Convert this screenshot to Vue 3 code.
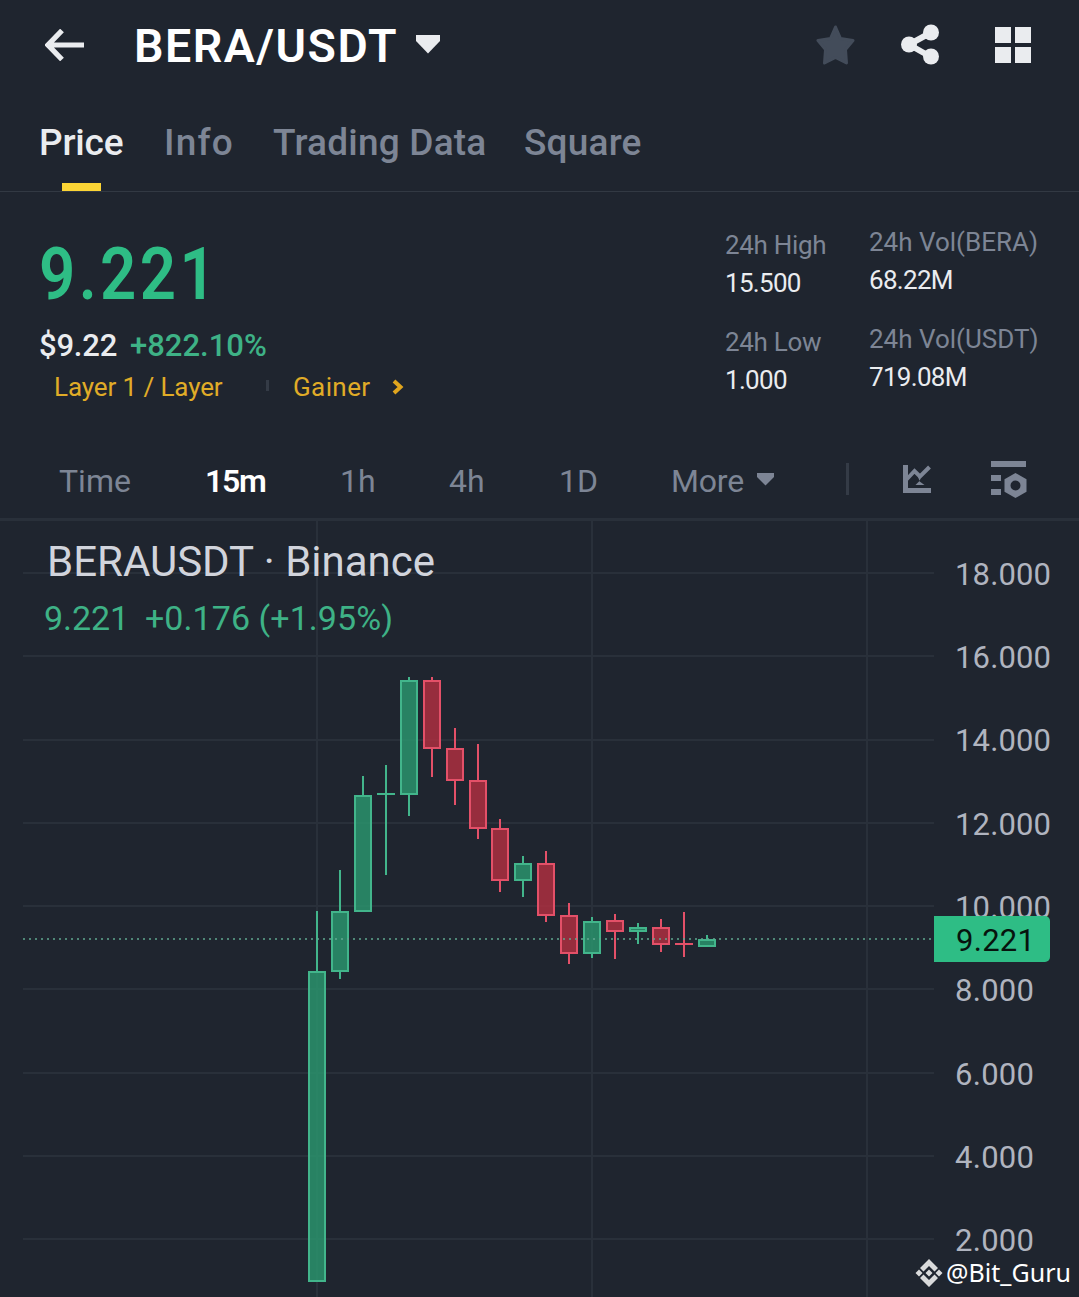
<script setup>
const tabs = [
  { label: 'Price', left: 39, spacing: -0.2, active: true },
  { label: 'Info', left: 164, spacing: 1.2 },
  { label: 'Trading Data', left: 273, spacing: 0.2 },
  { label: 'Square', left: 524, spacing: 0.2 },
].map((t, i, all) => ({ ...t, width: (all[i + 1]?.left ?? 700) - t.left }))

const intervals = [
  { label: 'Time', width: 146 },
  { label: '15m', width: 135, active: true },
  { label: '1h', width: 109 },
  { label: '4h', width: 110 },
  { label: '1D', width: 112 },
]

const stats = [
  [{ name: '24h High', value: '15.500' }, { name: '24h Low', value: '1.000' }],
  [{ name: '24h Vol(BERA)', value: '68.22M' }, { name: '24h Vol(USDT)', value: '719.08M' }],
]

const rows = [573, 656, 740, 823, 906, 989, 1073, 1156, 1239]
const columns = [317, 592, 867]
const prices = rows.map((y, i) => ({ y: y + (i === 2 ? 11 : 12), text: (18 - i * 2).toFixed(3) }))

// x centre, body top, body bottom, wick top, wick bottom, rising
const candles = [
  [317, 971, 1282, 911, 1282, 1],
  [340, 911, 972, 870, 979, 1],
  [363, 795, 912, 776, 912, 1],
  [386, 793, 795, 765, 875, 1],
  [409, 680, 795, 677, 816, 1],
  [432, 680, 749, 677, 777, 0],
  [455, 748, 781, 728, 805, 0],
  [478, 780, 829, 744, 839, 0],
  [500, 828, 881, 819, 892, 0],
  [523, 863, 881, 856, 897, 1],
  [546, 863, 916, 851, 922, 0],
  [569, 915, 954, 903, 964, 0],
  [592, 921, 954, 917, 958, 1],
  [615, 920, 932, 914, 959, 0],
  [638, 927, 932, 923, 944, 1],
  [661, 927, 945, 919, 952, 0],
  [684, 943, 945, 912, 957, 0],
  [707, 939, 947, 935, 947, 1],
].map(([x, top, bottom, high, low, up]) => ({ x, top, bottom, high, low, up }))
</script>

<template>
  <main class="screen">
    <header class="bar">
      <svg class="back" width="40" height="32" viewBox="0 0 40 32">
        <path d="M17 1.500 3 16l14 14.500M3 16h36" fill="none" stroke="#eaecef" stroke-width="5.200" />
      </svg>
      <h1>BERA/USDT</h1>
      <svg class="caret" width="24" height="19" viewBox="0 0 24 19">
        <path d="M0 0h24v6L12 18.500 0 6z" fill="#eaecef" />
      </svg>
      <div class="actions">
        <svg width="40" height="42" viewBox="0 0 40 42">
          <path d="M19.500 3 24.500 14.500 37 16.500 29.500 25.500 30.500 39 19.500 33.500 8.500 39 9.500 25.500 2 16.500 14.500 14.500z" fill="#434c5a" stroke="#434c5a" stroke-width="3" stroke-linejoin="round" />
        </svg>
        <svg class="share" width="38" height="42" viewBox="0 0 38 42">
          <path d="M30 8.500 8 20.500l22 12.500" fill="none" stroke="#eaecef" stroke-width="6" />
          <circle cx="30" cy="8.500" r="8" fill="#eaecef" />
          <circle cx="8" cy="20.500" r="8" fill="#eaecef" />
          <circle cx="30" cy="32.500" r="8" fill="#eaecef" />
        </svg>
        <svg class="grid" width="36" height="36" viewBox="0 0 36 36">
          <path d="M0 0h16v16H0zM20 0h16v16H20zM0 20h16v16H0zM20 20h16v16H20z" fill="#eaecef" />
        </svg>
      </div>
    </header>

    <nav class="tabs">
      <a v-for="t in tabs" :key="t.label" :class="{ active: t.active }" :style="{ width: t.width + 'px', letterSpacing: t.spacing + 'px' }">{{ t.label }}</a>
    </nav>

    <section class="summary">
      <div class="quote">
        <div class="last">9.221</div>
        <div class="change"><b>$9.22</b><span>+822.10%</span></div>
        <div class="tags">
          <span class="layer">Layer 1 / Layer</span>
          <i></i>
          <span class="gainer">Gainer</span>
          <svg width="12" height="16" viewBox="0 0 12 16">
            <path d="m2 2 6.500 6L2 14" fill="none" stroke="#e0a51e" stroke-width="4" />
          </svg>
        </div>
      </div>
      <div v-for="(group, i) in stats" :key="i" class="stats" :class="{ volume: i === 1 }">
        <dl v-for="s in group" :key="s.name">
          <dt>{{ s.name }}</dt>
          <dd>{{ s.value }}</dd>
        </dl>
      </div>
    </section>

    <div class="intervals">
      <span v-for="n in intervals" :key="n.label" :class="{ active: n.active }" :style="{ width: n.width + 'px' }">{{ n.label }}</span>
      <span class="more">More</span>
      <svg class="drop" width="17" height="13" viewBox="0 0 17 13">
        <path d="M0 0h17v4L8.500 12.500 0 4z" fill="#7d8595" />
      </svg>
      <i></i>
      <svg class="kline" width="30" height="30" viewBox="0 0 30 30">
        <path d="M2.500 1v25.500H28" fill="none" stroke="#7d8595" stroke-width="5" />
        <path d="M3.500 15.500 11.500 7l5.500 5.500L26.500 3" fill="none" stroke="#7d8595" stroke-width="4" />
        <path d="m14 10 3.500 5-1.500 2 5.500 4h-9l4-4z" fill="#7d8595" />
      </svg>
      <svg class="settings" width="36" height="38" viewBox="0 0 36 38">
        <path d="M0 1h35v6H0zM0 15h10v6H0zM0 29h10v6H0z" fill="#7d8595" />
        <path fill-rule="evenodd" d="m24.500 13 11 6.200v12.600l-11 6.200-11-6.200V19.200zM24.500 20.500a5 5 0 1 0 0 10 5 5 0 0 0 0-10z" fill="#7d8595" />
      </svg>
    </div>

    <svg class="chart" width="1079" height="779" viewBox="0 518 1079 779">
      <g fill="#29303a">
        <rect x="0" y="518" width="1079" height="3" />
        <rect v-for="y in rows" :key="y" x="23" :y="y - 1" width="911" height="2" />
        <rect v-for="x in columns" :key="x" :x="x - 1" y="519" width="2" height="778" />
      </g>
      <g v-for="c in candles" :key="c.x" :class="c.up ? 'up' : 'down'">
        <rect class="edge" :x="c.x - 1" :y="c.high" width="2" :height="c.top - c.high" />
        <rect class="edge" :x="c.x - 1" :y="c.bottom" width="2" :height="c.low - c.bottom" />
        <rect v-if="c.bottom - c.top < 3" class="edge" :x="c.x - 9" :y="c.top" width="18" height="2" />
        <rect v-else class="body" :x="c.x - 8" :y="c.top + 1" width="16" :height="c.bottom - c.top - 2" />
      </g>
      <path d="M23 939H934" stroke="#60a890" stroke-opacity=".75" stroke-width="2" stroke-dasharray="2 4" />
      <text class="pair" x="47" y="576" textLength="388">BERAUSDT · Binance</text>
      <text class="move" x="44" y="630" textLength="85">9.221</text>
      <text class="move" x="145" y="630" textLength="248">+0.176 (+1.95%)</text>
      <text v-for="p in prices" :key="p.y" class="price" x="955" :y="p.y" :textLength="p.text.length > 5 ? 96 : 79">{{ p.text }}</text>
      <path d="M934 916h111a5 5 0 0 1 5 5v36a5 5 0 0 1-5 5H934z" fill="#2ebd85" />
      <text class="current" x="956" y="951" textLength="79">9.221</text>
      <g fill="#d9dadb">
        <path d="m929 1259 9 9-3.500 3.500-5.500-5.500-5.500 5.500-3.500-3.500zM929 1287l9-9-3.500-3.500-5.500 5.500-5.500-5.500-3.500 3.500zM929 1269.500l3.500 3.500-3.500 3.500-3.500-3.500zM919 1269.500l3.500 3.500-3.500 3.500-3.500-3.500zM939 1269.500l3.500 3.500-3.500 3.500-3.500-3.500z" />
      </g>
      <text class="handle" x="946" y="1282" textLength="125">@Bit_Guru</text>
    </svg>
  </main>
</template>

<style>
body { background: #1f252f; }
</style>

<style scoped>
.screen {
  width: 1079px;
  height: 1297px;
  overflow: hidden;
  background: #1f252f;
  color: #7d8595;
  font-family: Roboto, "Liberation Sans", sans-serif;
  white-space: nowrap;
}
.bar { display: flex; align-items: center; height: 89px; padding-left: 45px; box-sizing: border-box; }
h1 { flex: none; margin: 3px 0 0 49px; width: 282px; font-size: 46.500px; font-weight: 600; letter-spacing: 1.500px; color: #fff; }
.back { flex: none; }
.actions { display: flex; align-items: center; margin-left: auto; padding-right: 48px; }
.share { margin-left: 45px; }
.grid { margin-left: 56px; }

.tabs { display: flex; height: 102px; padding-left: 39px; border-bottom: 1px solid #323943; font-size: 37px; font-weight: 500; line-height: 108px; }
.tabs a { position: relative; flex: none; }
.tabs .active { color: #eaecef; }
.tabs .active::after { content: ""; position: absolute; left: 23px; top: 94px; width: 39px; height: 8px; background: #fcd535; }

.summary { display: flex; height: 248px; }
.quote { width: 725px; flex: none; padding-left: 39px; box-sizing: border-box; }
.last { margin-top: 39px; height: 86px; line-height: 86px; font-size: 73px; font-weight: 600; color: #2ebd85; letter-spacing: 3.900px; transform: scaleX(.87); transform-origin: left; }
.change { display: flex; height: 44px; margin-top: 7px; line-height: 44px; font-size: 31px; font-weight: 500; color: #3eb286; }
.change b { width: 91px; font-weight: 500; letter-spacing: -.2px; color: #eaecef; }
.tags { display: flex; align-items: center; height: 36px; margin-top: 1px; padding-left: 15px; font-size: 26px; color: #e0ac27; }
.layer { width: 212px; letter-spacing: -.1px; }
.tags i { width: 3px; height: 11px; margin-top: -4px; background: #343b46; }
.gainer { width: 99px; margin-left: 24px; letter-spacing: .4px; }
.stats { width: 144px; flex: none; padding-top: 34px; font-size: 26px; letter-spacing: -.3px; }
.volume { width: 180px; padding-top: 31px; letter-spacing: 0; }
dl { margin: 0 0 21px; }
dt { height: 38px; line-height: 38px; }
dd { margin: 0; height: 38px; line-height: 38px; font-size: 26px; letter-spacing: -.7px; color: #eaecef; }

.intervals { display: flex; align-items: center; height: 78px; padding-left: 59px; font-size: 32px; }
.intervals span { flex: none; margin-top: 4px; }
.intervals .active { font-weight: 600; letter-spacing: -1.300px; color: #fff; }
.more { width: 86px; letter-spacing: -.2px; }
.intervals i { width: 3px; height: 32px; margin-left: 72px; background: #343b46; }
.kline { margin-left: 54px; }
.settings { margin-left: 58px; }

.chart { display: block; }
.up .edge { fill: #42b58b; }
.down .edge { fill: #e35068; }
.up .body { fill: #2a9a70; fill-opacity: .8; stroke: #42b58b; stroke-width: 2; }
.down .body { fill: #b53041; fill-opacity: .8; stroke: #e35068; stroke-width: 2; }
.pair { font-size: 42px; fill: #d1d4dc; }
.move { font-size: 34px; fill: #3eb286; }
.price { font-size: 31px; fill: #b0b4bf; }
.current { font-size: 31px; fill: #07140e; }
.handle { font-family: "Noto Sans", sans-serif; font-size: 25px; fill: #fff; }
</style>
